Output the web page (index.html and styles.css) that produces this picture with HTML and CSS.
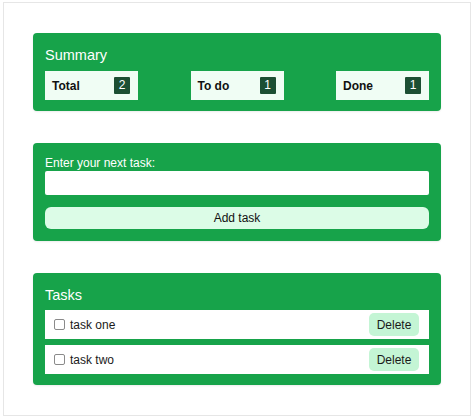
FILE: index.html
```html
<!DOCTYPE html>
<html lang="en">
<head>
<meta charset="utf-8">
<title>Tasks</title>
<link rel="stylesheet" href="styles.css">
</head>
<body>
<div class="frame">
  <section class="card summary">
    <h2 class="card-title">Summary</h2>
    <div class="stats">
      <div class="stat"><span class="stat-label">Total</span><span class="badge">2</span></div>
      <div class="stat"><span class="stat-label">To do</span><span class="badge">1</span></div>
      <div class="stat"><span class="stat-label">Done</span><span class="badge">1</span></div>
    </div>
  </section>

  <section class="card entry">
    <label class="entry-label" for="task">Enter your next task:</label>
    <input class="entry-input" id="task" type="text">
    <button class="add-btn" type="button">Add task</button>
  </section>

  <section class="card tasks">
    <h2 class="card-title">Tasks</h2>
    <ul class="task-list">
      <li class="task-row">
        <label class="task-label"><input class="check" type="checkbox"><span>task one</span></label>
        <button class="del-btn" type="button">Delete</button>
      </li>
      <li class="task-row">
        <label class="task-label"><input class="check" type="checkbox"><span>task two</span></label>
        <button class="del-btn" type="button">Delete</button>
      </li>
    </ul>
  </section>
</div>
</body>
</html>
```

FILE: styles.css
```css
* { box-sizing: border-box; }

html, body {
  margin: 0;
  padding: 0;
  background: #ffffff;
}

body {
  font-family: "Liberation Sans", Arial, Helvetica, sans-serif;
  color: #111;
}

.frame {
  margin: 2px 0 0 3px;
  width: 468px;
  height: 414px;
  border: 1px solid #e6e6e6;
  padding: 30px 29px 0 29px;
  display: flex;
  flex-direction: column;
  gap: 32px;
}

.card {
  background: #17a34a;
  border-radius: 4px;
  padding: 12px 12px 11px 12px;
  display: flex;
  flex-direction: column;
  box-shadow: 0 1px 2px rgba(0,0,0,0.08);
}

.card-title {
  margin: 0;
  font-size: 14.5px;
  line-height: 20px;
  font-weight: 400;
  color: #ffffff;
}

.stats {
  margin-top: 6px;
  display: flex;
  justify-content: space-between;
}

.stat {
  width: 93px;
  height: 29px;
  background: #f0fdf4;
  display: flex;
  align-items: center;
  justify-content: space-between;
  padding: 0 8px 0 7px;
}

.stat-label {
  font-size: 12px;
  font-weight: 700;
  color: #111;
}

.badge {
  width: 16px;
  height: 17px;
  background: #1c4f33;
  color: #fff;
  font-size: 12px;
  line-height: 17px;
  text-align: center;
  border-radius: 1px;
}

.entry-label {
  font-size: 12px;
  line-height: 16px;
  color: #ffffff;
}

.entry-input {
  margin-top: 0;
  height: 24px;
  border: none;
  border-radius: 2px;
  background: #fff;
  padding: 0 6px;
  font: inherit;
}

.entry.card {
  padding-bottom: 12px;
}

.add-btn {
  margin-top: 12px;
  height: 22px;
  border: none;
  border-radius: 6px;
  background: #dcfce7;
  font-family: inherit;
  font-size: 12px;
  color: #111;
}

.task-list {
  list-style: none;
  margin: 5px 0 0 0;
  padding: 0;
  display: flex;
  flex-direction: column;
  gap: 6px;
}

.task-row {
  height: 29px;
  background: #ffffff;
  display: flex;
  align-items: center;
  justify-content: space-between;
  padding: 0 10px 0 9px;
}

.task-label {
  display: flex;
  align-items: center;
  gap: 5px;
  font-size: 12px;
  color: #1a1a1a;
}

.check {
  appearance: none;
  -webkit-appearance: none;
  margin: 0;
  width: 11px;
  height: 11px;
  border: 1px solid #8a8a8a;
  border-radius: 2px;
  background: #fff;
}

.del-btn {
  height: 23px;
  width: 50px;
  border: none;
  border-radius: 5px;
  background: #c4f5d5;
  font-family: inherit;
  font-size: 12px;
  color: #1a1a1a;
  padding: 0;
}
```
